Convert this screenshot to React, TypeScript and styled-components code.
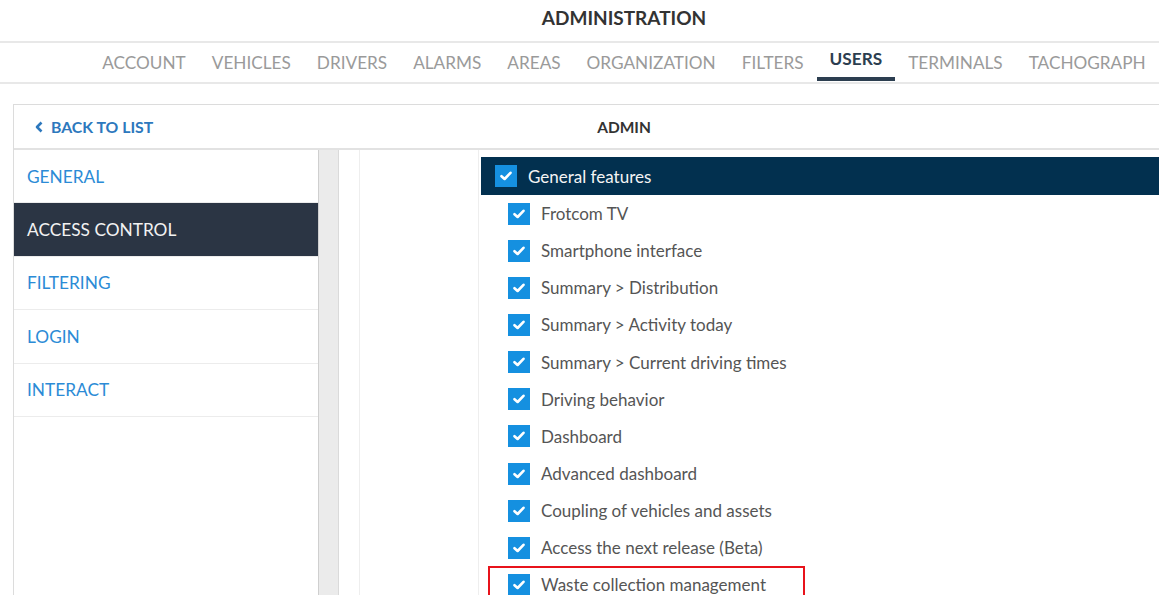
import React from "react";
import styled, { createGlobalStyle } from "styled-components";

const GlobalStyle = createGlobalStyle`
  html, body {
    margin: 0;
    padding: 0;
    background: #fff;
    overflow: hidden;
  }
  body {
    font-family: Lato, "Open Sans", sans-serif;
  }
`;

const tabs = [
  "ACCOUNT",
  "VEHICLES",
  "DRIVERS",
  "ALARMS",
  "AREAS",
  "ORGANIZATION",
  "FILTERS",
  "USERS",
  "TERMINALS",
  "TACHOGRAPH",
];

const navItems = ["GENERAL", "ACCESS CONTROL", "FILTERING", "LOGIN", "INTERACT"];

const features = [
  "Frotcom TV",
  "Smartphone interface",
  "Summary > Distribution",
  "Summary > Activity today",
  "Summary > Current driving times",
  "Driving behavior",
  "Dashboard",
  "Advanced dashboard",
  "Coupling of vehicles and assets",
  "Access the next release (Beta)",
  "Waste collection management",
];

const CheckBox: React.FC = () => (
  <Box>
    <svg width="12" height="10" viewBox="0 0 12 10">
      <path
        d="M1.5 5.2 L4.6 8 L10.5 1.8"
        fill="none"
        stroke="#fff"
        strokeWidth="2.6"
        strokeLinecap="round"
        strokeLinejoin="round"
      />
    </svg>
  </Box>
);

const App: React.FC = () => {
  return (
    <Page>
      <GlobalStyle />
      <TitleBar>ADMINISTRATION</TitleBar>
      <TabBar>
        {tabs.map((t) => (
          <Tab key={t} active={t === "USERS"}>
            {t}
          </Tab>
        ))}
      </TabBar>
      <Panel>
        <PanelHeader>
          <BackLink>
            <svg width="10" height="12" viewBox="0 0 10 12">
              <path
                d="M7.5 1.5 L3 6 L7.5 10.5"
                fill="none"
                stroke="#2d78bd"
                strokeWidth="2.6"
                strokeLinejoin="round"
              />
            </svg>
            BACK TO LIST
          </BackLink>
          <HeaderTitle>ADMIN</HeaderTitle>
          <span />
        </PanelHeader>
        <PanelBody>
          <SideNav>
            {navItems.map((n) => (
              <NavItem key={n} active={n === "ACCESS CONTROL"}>
                {n}
              </NavItem>
            ))}
          </SideNav>
          <ScrollTrack />
          <Gutter />
          <Column />
          <FeatureList>
            <GroupHeader>
              <CheckBox />
              General features
            </GroupHeader>
            {features.map((f, i) => (
              <FeatureRow key={f} highlighted={i === features.length - 1}>
                <CheckBox />
                {f}
              </FeatureRow>
            ))}
          </FeatureList>
        </PanelBody>
      </Panel>
    </Page>
  );
};

const Page = styled.div`
  width: 1248px;
  height: 595px;
  overflow: hidden;
  display: flex;
  flex-direction: column;
`;

const TitleBar = styled.div`
  height: 43px;
  flex-shrink: 0;
  box-sizing: border-box;
  padding-bottom: 6px;
  display: flex;
  align-items: center;
  justify-content: center;
  border-bottom: 2px solid #e8e8e8;
  font-size: 19px;
  font-weight: 700;
  color: #333;
`;

const TabBar = styled.div`
  height: 41px;
  flex-shrink: 0;
  box-sizing: border-box;
  display: flex;
  justify-content: center;
  border-bottom: 2px solid #e8e8e8;
`;

const Tab = styled.div<{ active?: boolean }>`
  display: flex;
  align-items: center;
  box-sizing: border-box;
  padding: 0 13px;
  margin-bottom: 1px;
  border-bottom: 4px solid ${(p) => (p.active ? "#2c3e50" : "transparent")};
  font-size: 17.2px;
  font-weight: ${(p) => (p.active ? 700 : 400)};
  color: ${(p) => (p.active ? "#2c3e50" : "#9a9a9a")};
  padding-top: ${(p) => (p.active ? "0" : "4px")};
  padding-bottom: ${(p) => (p.active ? "4px" : "0")};
`;

const Panel = styled.div`
  flex: 1;
  margin: 20px 13px 0;
  border: 1px solid #dcdcdc;
  border-bottom: none;
  display: flex;
  flex-direction: column;
  min-height: 0;
`;

const PanelHeader = styled.div`
  height: 45px;
  flex-shrink: 0;
  box-sizing: border-box;
  display: grid;
  grid-template-columns: 1fr auto 1fr;
  align-items: center;
  border-bottom: 2px solid #e2e2e2;
`;

const BackLink = styled.div`
  display: flex;
  align-items: center;
  gap: 7px;
  padding-left: 20px;
  font-size: 15.8px;
  font-weight: 700;
  color: #2d78bd;
`;

const HeaderTitle = styled.div`
  font-size: 15.5px;
  font-weight: 700;
  color: #333;
`;

const PanelBody = styled.div`
  flex: 1;
  display: flex;
  min-height: 0;
`;

const SideNav = styled.div`
  width: 304px;
  border-right: 1px solid #cfcfcf;
  display: flex;
  flex-direction: column;
`;

const NavItem = styled.div<{ active?: boolean }>`
  height: 52.4px;
  flex-shrink: 0;
  display: flex;
  align-items: center;
  padding-left: 13px;
  border-bottom: 1px solid #ececec;
  font-size: 17.3px;
  color: ${(p) => (p.active ? "#f2f2f2" : "#2b8bd6")};
  background: ${(p) => (p.active ? "#2b3544" : "transparent")};
`;

const ScrollTrack = styled.div`
  width: 19px;
  background: #ebebeb;
  border-right: 1px solid #dadada;
`;

const Gutter = styled.div`
  width: 20px;
  border-right: 1px solid #eeeeee;
`;

const Column = styled.div`
  width: 118px;
  border-right: 1px solid #eeeeee;
`;

const FeatureList = styled.div`
  flex: 1;
  padding-top: 7px;
  margin-left: 2px;
  display: flex;
  flex-direction: column;
`;

const GroupHeader = styled.div`
  height: 38px;
  flex-shrink: 0;
  display: flex;
  align-items: center;
  gap: 11px;
  padding-left: 14px;
  background: #02304f;
  color: #f4f4f4;
  font-size: 17px;
`;

const FeatureRow = styled.div<{ highlighted?: boolean }>`
  height: 37.15px;
  flex-shrink: 0;
  box-sizing: border-box;
  display: flex;
  align-items: center;
  gap: 11px;
  font-size: 17px;
  color: #555;
  padding-left: ${(p) => (p.highlighted ? "18px" : "27px")};
  margin-left: ${(p) => (p.highlighted ? "7px" : "0")};
  width: ${(p) => (p.highlighted ? "317px" : "auto")};
  border: ${(p) => (p.highlighted ? "2px solid #e8131b" : "none")};
`;

const Box = styled.span`
  width: 22px;
  height: 22px;
  flex-shrink: 0;
  background: #1590e0;
  display: inline-flex;
  align-items: center;
  justify-content: center;
`;

export default App;
